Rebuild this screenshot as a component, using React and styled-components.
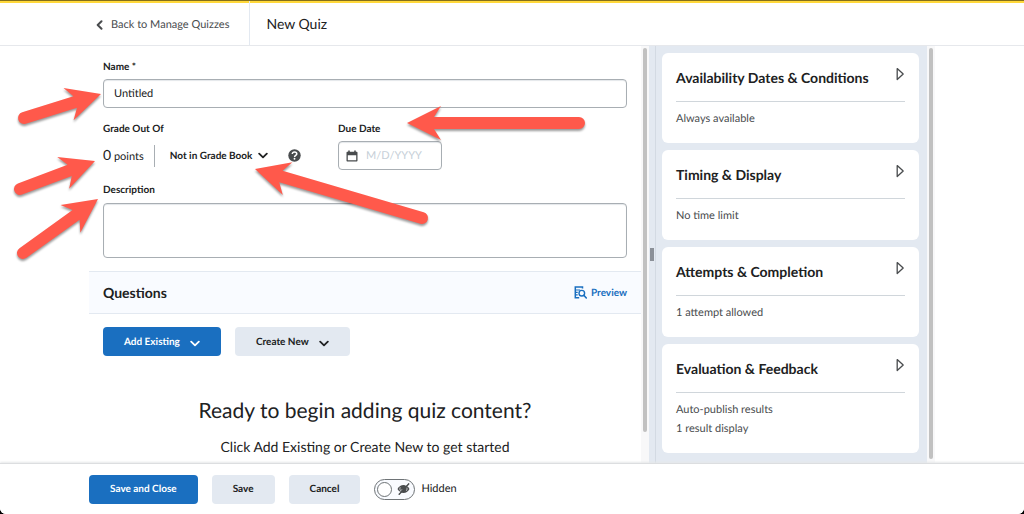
import React from "react";
import styled, { createGlobalStyle, css } from "styled-components";

const ink = "#202122";
const slate = "#494c4e";
const blue = "#1a6fc0";
const mist = "#e3e9f1";
const edge = "#a8aeb3";

const GlobalStyle = createGlobalStyle`
  *, *::before, *::after { box-sizing: border-box; }
  html, body, #root { height: 100%; }
  body { margin: 0; background: #000; overflow: hidden; }
  body, button, input, textarea { font-family: Lato, "Liberation Sans", sans-serif; color: ${ink}; text-rendering: geometricPrecision; }
  h1, h2, h3, p { margin: 0; }
`;

const Page = styled.div`
  position: relative;
  display: flex;
  flex-direction: column;
  height: 100vh;
  background: #fff;
  border-radius: 0 0 6px 6px;
  overflow: hidden;
`;

const Header = styled.header`
  display: flex;
  flex: none;
  height: 46px;
  padding: 0 89px;
  border-top: 1px solid #85701a;
  border-bottom: 1px solid #e6e8ec;
  box-shadow: inset 0 2px 0 #ffd83a;
`;

const BackLink = styled.a`
  display: flex;
  align-items: center;
  gap: 8px;
  padding: 3px 20px 0 7px;
  border-right: 1px solid ${mist};
  font-size: 11px;
  line-height: 16px;
  color: ${slate};
  text-decoration: none;
`;

const PageTitle = styled.h1`
  padding: 2px 16px 0;
  font-size: 14px;
  font-weight: 400;
  line-height: 42px;
`;

const Workspace = styled.div`
  display: flex;
  flex: 1;
  min-height: 0;
  padding: 0 89px;
`;

const Main = styled.main`
  flex: 1;
  min-width: 0;
  overflow: hidden;
`;

const Track = styled.div`
  flex: none;
  width: 8px;
  padding: 2px 2px ${(p) => p.$rest}px;
  background: #f8f8f9;
`;

const Thumb = styled.div`
  height: 100%;
  border-radius: 2px;
  background: #c1c1c1;
`;

const Divider = styled.div`
  display: flex;
  flex: none;
  align-items: center;
  justify-content: center;
  width: 7px;
  background: ${mist};
  border-right: 1px solid #d3dae3;
`;

const Grip = styled.span`
  width: 4px;
  height: 13px;
  background: #8b9098;
`;

const Form = styled.form`
  display: flex;
  flex-direction: column;
  padding: 13px 14px;
`;

const Label = styled.label`
  display: block;
  font-size: 10px;
  font-weight: 700;
  line-height: 16px;
`;

const boxed = css`
  border: 1px solid ${edge};
  border-radius: 4px;
  background: #fff;
  box-shadow: inset 0 1px 1px #e4e7ea;
`;

const NameInput = styled.input`
  ${boxed}
  display: block;
  width: 100%;
  height: 29px;
  margin: 4px 0 13px;
  padding: 0 10px;
  font-size: 11px;
`;

const Row = styled.div`
  display: flex;
`;

const GradeGroup = styled.div`
  width: 235px;
`;

const GradeRow = styled.div`
  display: flex;
  align-items: center;
  height: 29px;
  margin-top: 4px;
`;

const Points = styled.span`
  padding-right: 10px;
  border-right: 1px solid ${edge};
  font-size: 11px;
  line-height: 20px;
  white-space: nowrap;
`;

const PointsValue = styled.span`
  font-size: 14px;
`;

const PlainButton = styled.button`
  display: flex;
  align-items: center;
  gap: ${(p) => p.$gap || 0}px;
  padding: 0;
  border: 0;
  background: none;
  font-size: 10px;
  font-weight: 700;
  line-height: 16px;
  color: ${(p) => p.$color || ink};
  white-space: nowrap;
`;

const GradeBook = styled(PlainButton)`
  margin: 0 20px 0 15px;
`;

const DateBox = styled.div`
  ${boxed}
  display: flex;
  align-items: center;
  gap: 8px;
  width: 104px;
  height: 29px;
  margin-top: 4px;
  padding: 0 7px;

  svg { flex: none; }
`;

const DateInput = styled.input`
  width: 100%;
  min-width: 0;
  padding: 0;
  border: 0;
  background: none;
  font-size: 11px;
  &::placeholder { color: #c6cfd8; opacity: 1; }
`;

const DescriptionLabel = styled(Label)`
  margin-top: 12px;
`;

const Description = styled.textarea`
  ${boxed}
  display: block;
  width: 100%;
  height: 55px;
  margin-top: 5px;
  padding: 8px 10px;
  font-size: 11px;
  resize: none;
`;

const QuestionsBar = styled.div`
  display: flex;
  align-items: center;
  justify-content: space-between;
  height: 43px;
  padding: 0 14px;
  border: solid ${mist};
  border-width: 1px 0;
  background: #f9fbff;
`;

const SectionTitle = styled.h2`
  font-size: 14px;
  font-weight: 700;
  line-height: 20px;
`;

const Actions = styled.div`
  display: flex;
  gap: 14px;
  padding: 13px 14px;
`;

const Button = styled.button`
  display: flex;
  align-items: center;
  gap: 10px;
  height: 29px;
  padding: 0 21px;
  border: 0;
  border-radius: 4px;
  background: ${(p) => (p.$primary ? blue : mist)};
  color: ${(p) => (p.$primary ? "#fff" : ink)};
  font-size: 10px;
  font-weight: 700;
  line-height: 16px;
  white-space: nowrap;

  svg { margin-top: 3px; }
`;

const Empty = styled.div`
  padding: 28px 14px;
  text-align: center;
`;

const EmptyTitle = styled.h2`
  font-size: 21px;
  font-weight: 400;
  line-height: 28px;
`;

const EmptyText = styled.p`
  margin-top: 12px;
  font-size: 14px;
  line-height: 20px;
`;

const Aside = styled.aside`
  display: flex;
  flex: 0 0 271px;
  flex-direction: column;
  gap: 7px;
  padding: 7px 8px 0 6px;
  background: ${mist};
  overflow: hidden;
`;

const Card = styled.section`
  flex: none;
  padding: 14px 14px 15px;
  border-radius: 6px;
  background: #fff;
`;

const CardHead = styled.div`
  display: flex;
  align-items: flex-start;
  justify-content: space-between;
  padding-bottom: 13px;
  border-bottom: 1px solid #d0d6db;
  margin-bottom: 7px;
`;

const CardTitle = styled(SectionTitle).attrs({ as: "h3" })`
  line-height: 21px;
`;

const CardText = styled.p`
  font-size: 11px;
  line-height: 19px;
  color: ${slate};
`;

const Footer = styled.footer`
  display: flex;
  flex: none;
  align-items: center;
  gap: 14px;
  height: 51px;
  padding: 0 89px;
  border-top: 1px solid #dcdee0;
  box-shadow: 0 -1px 2px #e6e8ea;
  z-index: 1;
  background: #fff;
`;

const SwitchLabel = styled.label`
  display: flex;
  align-items: center;
  gap: 6px;
  font-size: 11px;
  line-height: 16px;
`;

const SwitchTrack = styled.span`
  display: flex;
  align-items: center;
  gap: 5px;
  width: 41px;
  height: 21px;
  padding: 0 2px;
  border: 1px solid #6e7376;
  border-radius: 11px;
  background: #f9fbff;
`;

const SwitchInput = styled.input`
  appearance: none;
  flex: none;
  width: 15px;
  height: 15px;
  margin: 0;
  border: 1px solid #6e7376;
  border-radius: 50%;
  background: #fff;
`;

const Annotations = styled.svg`
  position: absolute;
  top: 0;
  left: 0;
  z-index: 2;
  pointer-events: none;
  filter: drop-shadow(0 2px 1px rgba(0, 0, 0, 0.4));
`;

const Chevron = ({ left }) => (
  <svg width={left ? 7 : 10} height={left ? 10 : 7} viewBox={left ? "0 0 7 10" : "0 0 11 7"} fill="none" stroke="currentColor" strokeWidth="2" strokeLinecap="round" strokeLinejoin="round" aria-hidden="true">
    <path d={left ? "M5.5 1.2 1.7 5l3.8 3.8" : "M1.3 1.5l4.2 4 4.2-4"} />
  </svg>
);

const HelpIcon = () => (
  <svg width="13" height="13" viewBox="0 0 13 13" fill="none" aria-hidden="true">
    <circle cx="6.5" cy="6.5" r="6.2" fill={slate} />
    <path d="M4.3 5.1C4.3 3.7 5.2 3 6.5 3s2.3.8 2.3 2c0 1.4-2.2 1.5-2.2 2.9" stroke="#fff" strokeWidth="1.5" />
    <circle cx="6.5" cy="9.8" r=".95" fill="#fff" />
  </svg>
);

const CalendarIcon = () => (
  <svg width="12" height="12" viewBox="0 0 12 12" aria-hidden="true">
    <path fillRule="evenodd" fill={slate} d="M2.2.5h1.6v1.3h4.4V.5h1.6v1.3h.7c.6 0 1 .4 1 1v7.7c0 .6-.4 1-1 1h-9c-.6 0-1-.4-1-1V2.8c0-.6.4-1 1-1h.7ZM1.8 5.2v5h8.4v-5Z" />
  </svg>
);

const PreviewIcon = () => (
  <svg width="13" height="13" viewBox="0 0 13 13" fill="none" stroke="currentColor" aria-hidden="true">
    <path d="M8.5 2.5V1H1.3v10.7h3.9" strokeWidth="1.5" />
    <path d="M1.2 4h5M1.2 6.4h2.5M1.2 8.8h2.5" strokeWidth="1.2" />
    <circle cx="7.8" cy="7.2" r="2.8" strokeWidth="1.4" />
    <path d="M9.8 9.3l2.5 2.7" strokeWidth="1.6" strokeLinecap="round" />
  </svg>
);

const TriangleIcon = () => (
  <svg width="9" height="14" viewBox="0 0 9 14" fill="none" stroke={slate} strokeWidth="1.3" strokeLinejoin="round" aria-hidden="true">
    <path d="M1.2 1.6v11l6-5.5Z" />
  </svg>
);

const HiddenEyeIcon = () => (
  <svg width="13" height="12" viewBox="0 0 13 12" fill="none" aria-hidden="true">
    <path d="M.5 6C2 3.3 4 2 6.5 2S11 3.3 12.5 6C11 8.7 9 10 6.5 10S2 8.7.5 6Z" fill={slate} />
    <circle cx="6.5" cy="6" r="3" fill={slate} />
    <path d="M3.2 4.3C2.7 5.4 2.8 6.6 3.4 7.5M9.8 4.6C10.2 5.6 10 6.9 9.3 7.8" stroke="#f9fbff" strokeWidth=".7" />
    <path d="M2.2 11.2 11.6.9" stroke={slate} strokeWidth="1.5" strokeLinecap="round" />
    <path d="M1.4 10.2 5 6.3M8.5 2.6 10.5.3" stroke="#f9fbff" strokeWidth=".6" />
  </svg>
);

const arrows = [
  { tip: [101, 94], tail: [24, 118] },
  { tip: [95, 161], tail: [20, 189] },
  { tip: [98, 199], tail: [23, 253] },
  { tip: [407, 123], tail: [579, 123] },
  { tip: [255, 169], tail: [422, 218] },
];

const Arrow = ({ tip, tail }) => {
  const dx = tail[0] - tip[0];
  const dy = tail[1] - tip[1];
  const length = Math.hypot(dx, dy);
  const angle = (Math.atan2(dy, dx) * 180) / Math.PI;
  return (
    <path
      fill="#ff594b"
      transform={`translate(${tip[0]} ${tip[1]}) rotate(${angle})`}
      d={`M0 0 34-17 27-6H${length}a6 6 0 0 1 0 12H27L34 17Z`}
    />
  );
};

const cards = [
  { title: "Availability Dates & Conditions", lines: ["Always available"] },
  { title: "Timing & Display", lines: ["No time limit"] },
  { title: "Attempts & Completion", lines: ["1 attempt allowed"] },
  { title: "Evaluation & Feedback", lines: ["Auto-publish results", "1 result display"] },
];

export default function App() {
  return (
    <>
      <GlobalStyle />
      <Page>
        <Header>
          <BackLink href="#quizzes">
            <Chevron left />
            Back to Manage Quizzes
          </BackLink>
          <PageTitle>New Quiz</PageTitle>
        </Header>
        <Workspace>
          <Main>
            <Form>
              <Label htmlFor="name">Name *</Label>
              <NameInput id="name" defaultValue="Untitled" />
              <Row>
                <GradeGroup>
                  <Label as="span">Grade Out Of</Label>
                  <GradeRow>
                    <Points><PointsValue>0</PointsValue> points</Points>
                    <GradeBook type="button" $gap={6}>Not in Grade Book <Chevron /></GradeBook>
                    <PlainButton type="button" aria-label="Help"><HelpIcon /></PlainButton>
                  </GradeRow>
                </GradeGroup>
                <div>
                  <Label htmlFor="due">Due Date</Label>
                  <DateBox>
                    <CalendarIcon />
                    <DateInput id="due" placeholder="M/D/YYYY" />
                  </DateBox>
                </div>
              </Row>
              <DescriptionLabel htmlFor="description">Description</DescriptionLabel>
              <Description id="description" />
            </Form>
            <QuestionsBar>
              <SectionTitle>Questions</SectionTitle>
              <PlainButton type="button" $gap={4} $color={blue}><PreviewIcon /> Preview</PlainButton>
            </QuestionsBar>
            <Actions>
              <Button type="button" $primary>Add Existing <Chevron /></Button>
              <Button type="button">Create New <Chevron /></Button>
            </Actions>
            <Empty>
              <EmptyTitle>Ready to begin adding quiz content?</EmptyTitle>
              <EmptyText>Click Add Existing or Create New to get started</EmptyText>
            </Empty>
          </Main>
          <Track $rest={31}><Thumb /></Track>
          <Divider><Grip /></Divider>
          <Aside>
            {cards.map((card) => (
              <Card key={card.title}>
                <CardHead>
                  <CardTitle>{card.title}</CardTitle>
                  <PlainButton type="button" aria-label={`Expand ${card.title}`}><TriangleIcon /></PlainButton>
                </CardHead>
                {card.lines.map((line) => <CardText key={line}>{line}</CardText>)}
              </Card>
            ))}
          </Aside>
          <Track $rest={4}><Thumb /></Track>
        </Workspace>
        <Footer>
          <Button type="button" $primary>Save and Close</Button>
          <Button type="button">Save</Button>
          <Button type="button">Cancel</Button>
          <SwitchLabel>
            <SwitchTrack>
              <SwitchInput type="checkbox" role="switch" />
              <HiddenEyeIcon />
            </SwitchTrack>
            Hidden
          </SwitchLabel>
        </Footer>
        <Annotations width="600" height="280" aria-hidden="true">
          {arrows.map((arrow) => <Arrow key={arrow.tip.join()} {...arrow} />)}
        </Annotations>
      </Page>
    </>
  );
}
